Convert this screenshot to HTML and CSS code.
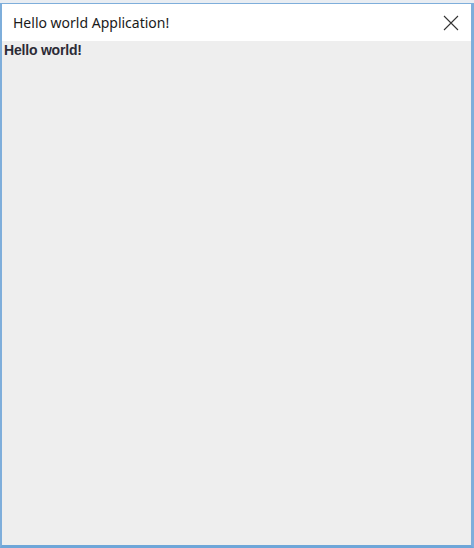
FILE: index.html
```html
<!DOCTYPE html>
<html>
<head>
<meta charset="utf-8">
<link rel="stylesheet" href="styles.css">
</head>
<body>
<div class="window">
  <div class="titlebar">
    <span class="title">Hello world Application!</span>
    <svg class="close" width="16" height="16" viewBox="0 0 16 16">
      <path d="M1 1 L15 15 M15 1 L1 15" stroke="#333" stroke-width="1.1" fill="none"/>
    </svg>
  </div>
  <div class="content">
    <div class="label">Hello world!</div>
  </div>
</div>
</body>
</html>
```
FILE: styles.css
```css
html, body {
  margin: 0;
  padding: 0;
  width: 474px;
  height: 548px;
  overflow: hidden;
  background: #e9edf2;
}
.window {
  box-sizing: border-box;
  margin-top: 3px;
  width: 474px;
  height: 545px;
  border: 2px solid #7eaedb;
  border-top: 1px solid #7eaedb;
  border-right: 3px solid #7eaedb;
  border-bottom: 3px solid #6ea6d8;
  display: flex;
  flex-direction: column;
  background: #eeeeee;
}
.titlebar {
  height: 37px;
  background: #ffffff;
  display: flex;
  align-items: center;
  justify-content: space-between;
  padding: 0 12px 0 11px;
  flex: none;
}
.title {
  font-family: "Noto Sans", "Open Sans", sans-serif;
  font-size: 14px;
  color: #1a1a1a;
}
.close {
  display: block;
}
.content {
  flex: 1;
  background: #eeeeee;
  padding: 1px 2px;
}
.label {
  font-family: "Liberation Sans", Arial, sans-serif;
  font-weight: bold;
  font-size: 14px;
  letter-spacing: -0.2px;
  color: #2c2b36;
}
```
